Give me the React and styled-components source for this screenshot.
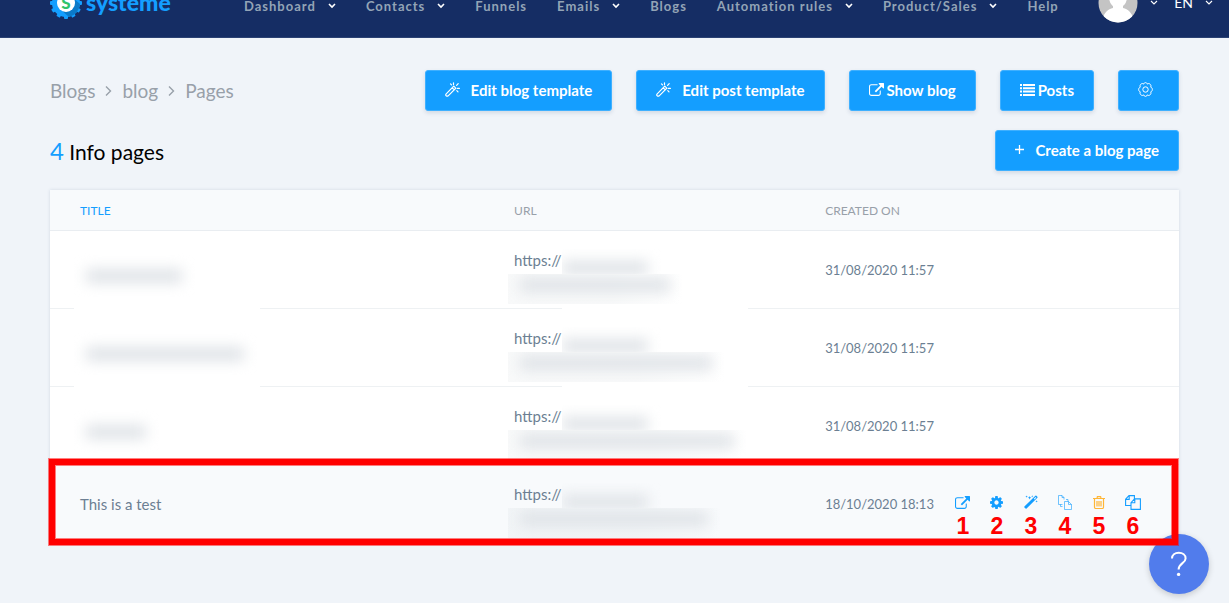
import React from 'react';
import styled, { createGlobalStyle, ThemeProvider } from 'styled-components';

const theme = {
    colors: {
        navy: '#152d64',
        page: '#f0f4f9',
        blue: '#149eff',
        muted: '#98a0a9',
        text: '#6c7f93',
        nav: '#93a4b6',
        red: '#ff0000',
        orange: '#ffb637',
        help: '#517cec'
    },
    font: "Lato, 'Open Sans', sans-serif"
};

const GlobalStyle = createGlobalStyle`
    * {
        box-sizing: border-box;
    }

    body {
        margin: 0;
        background: ${theme.colors.page};
        font-family: ${theme.font};
        font-size: 14px;
        color: ${theme.colors.text};
        overflow-x: hidden;
    }

    a {
        color: inherit;
        text-decoration: none;
    }

    button {
        font-family: inherit;
        cursor: pointer;
    }

    svg {
        display: block;
        flex: none;
    }
`;

/* Header */

const Header = styled.header`
    display: flex;
    align-items: center;
    height: 66px;
    margin-top: -28px;
    padding: 0 16px 0 50px;
    background: ${({ theme }) => theme.colors.navy};
    border-bottom: 1px solid #2b4274;
`;

const Logo = styled.a`
    display: flex;
    align-items: center;
    gap: 4px;
    width: 194px;
    color: ${({ theme }) => theme.colors.blue};
    font-size: 23px;
    font-weight: 900;
    line-height: 24px;
    padding-bottom: 4px;
`;

const LogoText = styled.span`
    padding-bottom: 2px;
`;

const Nav = styled.nav`
    display: flex;
    gap: 30px;
    flex: 1;
    padding-top: 2px;
`;

const NavLink = styled.a`
    display: flex;
    align-items: center;
    gap: 12px;
    color: ${({ theme }) => theme.colors.nav};
    font-size: 13px;
    font-weight: 700;
    line-height: 20px;
    letter-spacing: 1px;
    white-space: nowrap;

    svg {
        color: white;
    }
`;

const Account = styled.div`
    display: flex;
    align-items: center;
    gap: 16px;
    padding-bottom: 4px;
    color: white;
`;

const AccountButton = styled.button`
    display: flex;
    align-items: center;
    gap: 12px;
    padding: 0;
    border: 0;
    background: none;
    color: white;
    font-size: 14px;
    line-height: 20px;
`;

/* Page */

const Container = styled.main`
    padding: 32px 50px 48px;
`;

const Bar = styled.div`
    display: flex;
    align-items: center;
    justify-content: space-between;
    min-height: 41px;
    margin-bottom: 19px;
`;

const Breadcrumb = styled.nav`
    display: flex;
    align-items: center;
    gap: 9px;
    color: ${({ theme }) => theme.colors.muted};
    font-size: 19px;
    line-height: 24px;
`;

const Buttons = styled.div`
    display: flex;
    gap: 24px;
`;

const Button = styled.button`
    display: flex;
    align-items: center;
    gap: ${({ $tight }) => ($tight ? '3px' : '11px')};
    min-width: 61px;
    height: 41px;
    padding: 0 19px 2px;
    border: 1px solid #3fb0ff;
    border-radius: 3px;
    background: ${({ theme }) => theme.colors.blue};
    box-shadow: 0 2px 4px rgba(40, 70, 110, 0.15);
    color: white;
    font-size: 15px;
    font-weight: 700;
    line-height: 20px;
    white-space: nowrap;
`;

const Heading = styled.h1`
    margin: 0;
    padding-top: 2px;
    color: black;
    font-size: 21px;
    font-weight: 400;
    line-height: 28px;

    span {
        color: ${({ theme }) => theme.colors.blue};
        font-size: 24px;
    }
`;

/* Table */

const Table = styled.table`
    width: 100%;
    border-collapse: separate;
    border-spacing: 0;
    table-layout: fixed;
    background: white;
    box-shadow: 0 0 3px rgba(60, 90, 130, 0.18);
`;

const Th = styled.th`
    width: ${({ $width }) => $width || 'auto'};
    height: 41px;
    padding: 0 0 0 30px;
    background: #f8fafc;
    border-bottom: 1px solid #e9edf1;
    color: ${({ theme, $active }) => ($active ? theme.colors.blue : theme.colors.muted)};
    font-size: 12px;
    font-weight: 400;
    text-align: left;
    text-transform: uppercase;
`;

const Row = styled.tr`
    position: relative;
    background: ${({ $selected }) => ($selected ? '#f8fafc' : 'white')};
`;

const Td = styled.td`
    position: ${({ $selected }) => ($selected ? 'static' : 'relative')};
    height: 78px;
    padding: 0 0 0 30px;
    border-bottom: 1px solid ${({ $selected }) => ($selected ? 'transparent' : '#eef1f3')};
    font-size: ${({ $small }) => ($small ? '13px' : '15px')};
    line-height: 20px;
    white-space: nowrap;
`;

/* Wipes out a stretch of the row border underneath a hidden value */
const BorderGap = styled.span`
    position: absolute;
    left: ${({ $left }) => $left};
    bottom: -1px;
    width: 186px;
    height: 1px;
    background: white;
`;

const Hidden = styled.span`
    display: flex;
    overflow: hidden;

    &::before {
        content: '';
        width: ${({ $width }) => $width}px;
        height: 14px;
        background: #dfe3e7;
        filter: blur(7px);
    }
`;

const HiddenTitle = styled(Hidden)`
    height: 54px;
    margin-left: -6px;
    padding: 26px 16px 0 12px;
`;

const HiddenHost = styled(Hidden)`
    width: 120px;
    height: 25px;
    margin-left: 1px;
    padding-top: 12px;
`;

const HiddenPath = styled(Hidden)`
    width: ${({ $width }) => $width + 24}px;
    height: 30px;
    margin-left: -6px;
    padding: 4px 12px 0;
    background: linear-gradient(90deg, rgba(120, 140, 150, 0.05) 60%, transparent);
`;

const Url = styled.a`
    display: block;
    height: 77px;
    padding-top: 18px;
`;

const UrlLine = styled.span`
    display: flex;
    height: 25px;
    line-height: 22px;
`;

const Actions = styled.div`
    display: flex;
    height: 77px;
    margin-left: -9px;
    padding-top: 26px;
`;

const Action = styled.div`
    display: flex;
    flex-direction: column;
    align-items: center;
    width: 34px;
`;

const ActionButton = styled.button`
    display: flex;
    align-items: center;
    justify-content: center;
    width: 24px;
    height: 22px;
    padding: 0;
    border: 0;
    background: none;
    color: ${({ theme, $warn }) => ($warn ? theme.colors.orange : theme.colors.blue)};
`;

const Step = styled.span`
    color: ${({ theme }) => theme.colors.red};
    font-family: 'Liberation Sans', Arial, sans-serif;
    font-size: 23px;
    font-weight: 700;
    line-height: 26px;
`;

const Highlight = styled.span`
    position: absolute;
    inset: -6px 1px -2px -1px;
    z-index: 2;
    border: 6px solid ${({ theme }) => theme.colors.red};
    box-shadow: 0 0 0 1px rgba(255, 0, 0, 0.5), inset 0 0 0 1px rgba(255, 0, 0, 0.5);
    pointer-events: none;
`;

const HelpButton = styled.button`
    position: fixed;
    right: 20px;
    bottom: 9px;
    z-index: 1;
    display: flex;
    align-items: center;
    justify-content: center;
    width: 60px;
    height: 60px;
    border: 0;
    border-radius: 50%;
    background: ${({ theme }) => theme.colors.help};
    box-shadow: 0 2px 6px rgba(0, 0, 0, 0.18);
    color: white;
`;

/* Icons */

const Chevron = ({ thin }) => (
    <svg width="8" height="6" viewBox="0 0 8 6" fill="none" stroke="currentColor">
        <path d="M1 1l3 3 3-3" strokeWidth={thin ? 1.1 : 1.6} />
    </svg>
);

const CrumbArrow = () => (
    <svg width="9" height="12" viewBox="0 0 9 12" fill="none" stroke="currentColor">
        <path d="M2 1.5L6.5 6 2 10.5" strokeWidth="1.4" />
    </svg>
);

const LogoMark = () => (
    <svg width="32" height="32" viewBox="-16 -16 32 32">
        <g fill="#149eff">
            <circle r="14" />
            {[0, 30, 60, 90, 120, 150].map(angle => (
                <rect key={angle} x="-2" y="-16" width="4" height="32" rx="1" transform={`rotate(${angle})`} />
            ))}
        </g>
        <path d="M6-6L14 1A14 14 0 0 1 3 14L-6 6z" fill="#0b7ac9" />
        <circle r="9" fill="white" />
        <text y="6" textAnchor="middle" fontSize="17" fontWeight="900" fill="#2fc36b">
            S
        </text>
    </svg>
);

const Avatar = () => (
    <svg width="40" height="40" viewBox="0 0 40 40">
        <clipPath id="avatar">
            <circle cx="20" cy="20" r="19.5" />
        </clipPath>
        <g clipPath="url(#avatar)">
            <rect width="40" height="40" fill="#c4c4c4" />
            <ellipse cx="20" cy="14" rx="9" ry="11" fill="white" />
            <path d="M15 22h10v3c5 1 9 5 10 10v5H5v-5c1-5 5-9 10-10z" fill="white" />
        </g>
    </svg>
);

const WandOutline = () => (
    <svg width="15" height="15" viewBox="0 0 15 15" fill="none" stroke="currentColor" strokeLinecap="round">
        <path d="M1.2 11.8l7.6-7.6 2 2-7.6 7.6q-1 .8-2 0t0-2zM7.3 5.8l2 2" strokeWidth="1.2" />
        <path d="M8.5.8v1.6M5.5 1.8l1 1M11.6 3.4l1.6-1.8M12.4 6.4h2M11.8 8.6l1.2 1.2" strokeWidth="1.2" />
    </svg>
);

const External = () => (
    <svg width="15" height="13" viewBox="0 0 1792 1536" fill="currentColor">
        <path d="M1408 928v320q0 119-84.5 203.5T1120 1536H288q-119 0-203.5-84.5T0 1248V416q0-119 84.5-203.5T288 128h704q14 0 23 9t9 23v64q0 14-9 23t-23 9H288q-66 0-113 47t-47 113v832q0 66 47 113t113 47h832q66 0 113-47t47-113V928q0-14 9-23t23-9h64q14 0 23 9t9 23zm384-864v512q0 26-19 45t-45 19-45-19l-176-176-652 652q-10 10-23 10t-23-10L695 983q-10-10-10-23t10-23l652-652-176-176q-19-19-19-45t19-45 45-19h512q26 0 45 19t19 45z" />
    </svg>
);

const List = () => (
    <svg width="15" height="12" viewBox="0 0 15 12" fill="currentColor">
        <path d="M0 0h2v2H0zM3 0h12v2H3zM0 3.3h2v2H0zM3 3.3h12v2H3zM0 6.6h2v2H0zM3 6.6h12v2H3zM0 9.9h2v2H0zM3 9.9h12v2H3z" />
    </svg>
);

const GearOutline = () => (
    <svg width="15" height="15" viewBox="-7.5 -7.5 15 15" fill="none" stroke="currentColor">
        <path d="M-1.8-5.4C-1.4-7.4 1.4-7.4 1.8-5.4C3.4-7 6.4-4.8 5.2-2.4C7.4-1.8 7.4 1.8 5.2 2.4C6.4 4.8 3.4 7 1.8 5.4C1.4 7.4-1.4 7.4-1.8 5.4C-3.4 7-6.4 4.8-5.2 2.4C-7.4 1.8-7.4-1.8-5.2-2.4C-6.4-4.8-3.4-7-1.8-5.4z" />
        <circle r="2.7" />
    </svg>
);

const Plus = () => (
    <svg width="9" height="9" viewBox="0 0 9 9" stroke="currentColor" strokeWidth="1.3">
        <path d="M4.5 0v9M0 4.5h9" />
    </svg>
);

const Cog = () => (
    <svg width="13" height="13" viewBox="0 -128 1536 1536" fill="currentColor">
        <path d="M1024 640q0-106-75-181t-181-75-181 75-75 181 75 181 181 75 181-75 75-181zm512-109v222q0 12-8 23t-20 13l-185 28q-19 54-39 91 35 50 107 138 10 12 10 25t-9 23q-27 37-99 108t-94 71q-12 0-26-9l-138-108q-44 23-91 38-16 136-29 186-7 28-36 28H657q-14 0-24.5-8.5T621 1386l-28-184q-49-16-90-37l-141 107q-10 9-25 9-14 0-25-11-126-114-165-168-7-10-7-23 0-12 8-23 15-21 51-66.5t54-70.5q-27-50-41-99L29 793q-13-2-21-12.5T0 757V535q0-12 8-23t19-13l186-28q14-46 39-92-40-57-107-138-10-12-10-24 0-10 9-23 26-36 98.5-107.5T337 15q13 0 26 10l138 107q44-23 91-38 16-136 29-186 7-28 36-28h222q14 0 24.5 8.5T915-90l28 184q49 16 90 37l142-107q9-9 24-9 13 0 25 10 129 119 165 170 7 8 7 22 0 12-8 23-15 21-51 66.5t-54 70.5q26 50 41 98l183 28q13 2 21 12.5t8 23.5z" />
    </svg>
);

const Magic = () => (
    <svg width="14" height="14" viewBox="0 0 14 14" fill="currentColor">
        <path d="M.4 11.6L11.4.8q.5-.4 1 0l1 1q.4.5 0 1L2.6 13.6q-.5.4-1 0l-1.2-1q-.4-.5 0-1zM9.8 3.8l.7.7 1.8-1.8-.7-.7z" fillRule="evenodd" />
        <path d="M2.6.4l.3.9.9.3-.9.3-.3.9-.3-.9-.9-.3.9-.3zM5.6 1l.5 1.3 1.3.5-1.3.5-.5 1.3-.5-1.3-1.3-.5 1.3-.5zM8.2.2l.3.8.8.3-.8.3-.3.8-.3-.8-.8-.3.8-.3zM12.6 5.2l.3.9.9.3-.9.3-.3.9-.3-.9-.9-.3.9-.3z" />
    </svg>
);

const Duplicate = () => (
    <svg width="14" height="15" viewBox="0 0 14 15" fill="none" stroke="currentColor" strokeWidth="0.6">
        <path d="M4.5 9.5h-4v-9h3.5l2 2v2M4 .5v2h2M6.5 6.5h4l3 3v5h-7zM10.5 6.5v3h3M2.5 9.5v2h2M8 4.5h2v2" />
    </svg>
);

const Trash = () => (
    <svg width="12" height="13" viewBox="0 0 12 13" fill="none" stroke="currentColor" strokeWidth="1.2">
        <path d="M0 2.5h12M4 2.3L4.4.6h3.2L8 2.3M1.5 2.5v8.8q0 1.2 1.2 1.2h6.6q1.2 0 1.2-1.2V2.5M4 5v5.5M6 5v5.5M8 5v5.5" />
    </svg>
);

/* Two dog-eared sheets, the front one overlapping the back one */
const Files = () => (
    <svg width="16" height="15" viewBox="0 0 16 15" fill="none" stroke="currentColor" strokeWidth="1.1">
        <path d="M6 10.5H.6V4.2L4 .6h5.4v3.8M4.2.6v3.8H.6" />
        <path d="M9.6 3.9h5.8v10.5H6V7.6zM9.8 3.9v3.9H6" />
    </svg>
);

const Question = () => (
    <svg width="18" height="26" viewBox="0 0 18 26" fill="none" stroke="currentColor" strokeWidth="2">
        <path d="M2 7.5C2 3.8 5 1.8 8.8 1.8S15.6 4 15.6 7.4C15.6 12.4 8.6 12 8.6 18.6" />
        <circle cx="8.6" cy="23.4" r="1.7" fill="currentColor" stroke="none" />
    </svg>
);

const menu = [
    { label: 'Dashboard', sub: true },
    { label: 'Contacts', sub: true },
    { label: 'Funnels' },
    { label: 'Emails', sub: true },
    { label: 'Blogs' },
    { label: 'Automation rules', sub: true },
    { label: 'Product/Sales', sub: true },
    { label: 'Help' }
];

const pages = [
    { id: 1, titleWidth: 96, urlWidth: 150, created: '31/08/2020 11:57' },
    { id: 2, titleWidth: 158, urlWidth: 192, created: '31/08/2020 11:57' },
    { id: 3, titleWidth: 60, urlWidth: 214, created: '31/08/2020 11:57' },
    { id: 4, title: 'This is a test', urlWidth: 188, created: '18/10/2020 18:13', selected: true }
];

const actions = [
    { label: 'Open', icon: <External /> },
    { label: 'Settings', icon: <Cog /> },
    { label: 'Edit', icon: <Magic /> },
    { label: 'Duplicate', icon: <Duplicate /> },
    { label: 'Delete', icon: <Trash />, warn: true },
    { label: 'Copy', icon: <Files /> }
];

const PageRow = ({ page }) => {
    const { title, titleWidth, urlWidth, created, selected } = page;

    return (
        <Row $selected={selected}>
            <Td $selected={selected}>
                {title || <HiddenTitle $width={titleWidth} />}
                {!selected && <BorderGap $left="24px" />}
            </Td>
            <Td $selected={selected}>
                <Url href="#url">
                    <UrlLine>
                        https://
                        <HiddenHost $width={86} />
                    </UrlLine>
                    <HiddenPath $width={urlWidth} />
                </Url>
                {!selected && <BorderGap $left="78px" />}
            </Td>
            <Td $selected={selected} $small>
                {created}
            </Td>
            <Td $selected={selected}>
                {selected && (
                    <>
                        <Actions>
                            {actions.map(({ label, icon, warn }, i) => (
                                <Action key={label}>
                                    <ActionButton aria-label={label} $warn={warn}>
                                        {icon}
                                    </ActionButton>
                                    <Step>{i + 1}</Step>
                                </Action>
                            ))}
                        </Actions>
                        <Highlight />
                    </>
                )}
            </Td>
        </Row>
    );
};

const App = () => (
    <ThemeProvider theme={theme}>
        <GlobalStyle />
        <Header>
            <Logo href="#home">
                <LogoMark />
                <LogoText>systeme</LogoText>
            </Logo>
            <Nav>
                {menu.map(({ label, sub }) => (
                    <NavLink key={label} href="#menu">
                        {label}
                        {sub && <Chevron />}
                    </NavLink>
                ))}
            </Nav>
            <Account>
                <AccountButton aria-label="Account">
                    <Avatar />
                    <Chevron thin />
                </AccountButton>
                <AccountButton>
                    EN
                    <Chevron thin />
                </AccountButton>
            </Account>
        </Header>
        <Container>
            <Bar>
                <Breadcrumb>
                    <a href="#blogs">Blogs</a>
                    <CrumbArrow />
                    <a href="#blog">blog</a>
                    <CrumbArrow />
                    <a href="#pages">Pages</a>
                </Breadcrumb>
                <Buttons>
                    <Button>
                        <WandOutline />
                        Edit blog template
                    </Button>
                    <Button>
                        <WandOutline />
                        Edit post template
                    </Button>
                    <Button $tight>
                        <External />
                        Show blog
                    </Button>
                    <Button $tight>
                        <List />
                        Posts
                    </Button>
                    <Button aria-label="Settings">
                        <GearOutline />
                    </Button>
                </Buttons>
            </Bar>
            <Bar>
                <Heading>
                    <span>4</span> Info pages
                </Heading>
                <Button>
                    <Plus />
                    Create a blog page
                </Button>
            </Bar>
            <Table>
                <thead>
                    <tr>
                        <Th $width="38.45%" $active>
                            Title
                        </Th>
                        <Th $width="27.55%">URL</Th>
                        <Th $width="11.5%">Created on</Th>
                        <Th aria-label="Actions" />
                    </tr>
                </thead>
                <tbody>
                    {pages.map(page => (
                        <PageRow key={page.id} page={page} />
                    ))}
                </tbody>
            </Table>
        </Container>
        <HelpButton aria-label="Help">
            <Question />
        </HelpButton>
    </ThemeProvider>
);

export default App;
